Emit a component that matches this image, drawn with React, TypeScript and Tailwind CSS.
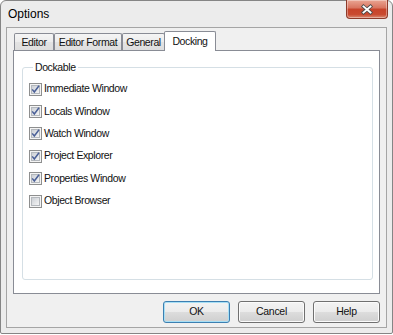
import React from "react";

const items: [string, boolean][] = [
  ["Immediate Window", true],
  ["Locals Window", true],
  ["Watch Window", true],
  ["Project Explorer", true],
  ["Properties Window", true],
  ["Object Browser", false],
];

function CheckBox({ checked }: { checked: boolean }) {
  return (
    <svg width="13" height="13" viewBox="0 0 13 13" className="shrink-0">
      <defs>
        <linearGradient id="cbg" x1="0" y1="0" x2="1" y2="1">
          <stop offset="0" stopColor="#c9cdd3" />
          <stop offset="1" stopColor="#f7f7f7" />
        </linearGradient>
      </defs>
      <rect x="0.5" y="0.5" width="12" height="12" fill="#f4f4f4" stroke="#8e8f8f" />
      <rect x="2.5" y="2.5" width="8" height="8" fill="url(#cbg)" stroke="#b4b8bd" />
      {checked && (
        <path d="M3.2 6.4 L5.3 9 L10 2.8" stroke="#4a5f97" strokeWidth="1.5" fill="none" />
      )}
    </svg>
  );
}

function Tab({ label, w }: { label: string; w: string }) {
  return (
    <div
      className={`${w} h-[17px] border border-b-0 border-[#898c95] rounded-t-[2px] bg-[linear-gradient(#f5f5f5,#ececec_50%,#e3e3e3_50%,#dedede)] flex items-center justify-center pt-[1px] text-[10.5px] tracking-[-0.4px] text-[#111]`}
    >
      {label}
    </div>
  );
}

function Button({ label, focused }: { label: string; focused?: boolean }) {
  return (
    <div
      className={`w-[67px] h-[22px] rounded-[3px] border flex items-center justify-center text-[10.5px] tracking-[-0.3px] text-[#111] bg-[linear-gradient(#f3f3f3,#ebebeb_50%,#dddddd_50%,#cfcfcf)] ${
        focused
          ? "border-[#3c7fb1] shadow-[inset_0_0_0_1px_#a8dff5]"
          : "border-[#707070] shadow-[inset_0_0_0_1px_#fbfbfb]"
      }`}
    >
      {label}
    </div>
  );
}

export default function App() {
  return (
    <div className="w-[393px] h-[335px] bg-white font-['Liberation_Sans',Arial,sans-serif]">
      <div className="w-[393px] h-[334px] rounded-t-[6px] rounded-b-[2px] border border-[#858585] bg-[#ececec] flex flex-col px-[5px] pb-[5px]">
        {/* title bar */}
        <div className="h-[26px] flex items-start justify-between">
          <div className="pl-[2px] pt-[6px] text-[12px] leading-[14px] text-black">Options</div>
          <div className="-mt-[1px] mr-[-1px] w-[42px] h-[19px] rounded-b-[4px] border border-t-0 border-[#8d3a2a] bg-[linear-gradient(#eaa593,#d8735e_45%,#c7432a_50%,#c94a30_80%,#d98a72)] shadow-[inset_0_0_0_1px_rgba(255,255,255,0.35)] flex items-center justify-center">
            <svg width="14" height="11" viewBox="0 0 14 11">
              <path d="M3.5 2.5 L10.5 8.5 M10.5 2.5 L3.5 8.5" stroke="#4b4b4b" strokeWidth="3.6" strokeLinecap="square" />
              <path d="M3.5 2.5 L10.5 8.5 M10.5 2.5 L3.5 8.5" stroke="#ffffff" strokeWidth="1.9" strokeLinecap="square" />
            </svg>
          </div>
        </div>
        {/* client */}
        <div className="flex-1 border border-[#a5a5a5] bg-[#f0f0f0] flex flex-col px-[6px] pb-[4px]">
          {/* tab strip */}
          <div className="h-[22px] flex items-end pl-[1px]">
            <Tab label="Editor" w="w-[40px]" />
            <Tab label="Editor Format" w="w-[68px]" />
            <Tab label="General" w="w-[43px]" />
            <div className="relative z-10 w-[52px] h-[20px] -mb-[1px] -ml-[1px] border border-b-0 border-[#898c95] rounded-t-[2px] bg-white flex items-start justify-center pt-[2px] text-[10.5px] tracking-[-0.4px] text-[#111]">
              Docking
            </div>
          </div>
          {/* panel */}
          <div className="flex-1 border border-[#898c95] bg-white px-[8px] pr-[6px] pb-[13px] flex flex-col">
            <fieldset className="flex-1 mt-[10px] border border-[#d5dfe5] rounded-[3px] pl-[6px] pt-[4px]">
              <legend className="ml-[4px] px-[2px] text-[10.5px] leading-[13px] tracking-[-0.4px] text-[#111]">Dockable</legend>
              <div className="flex flex-col">
                {items.map(([label, checked]) => (
                  <div key={label} className="h-[22.4px] flex items-center gap-[2px]">
                    <CheckBox checked={checked} />
                    <span className="text-[10.5px] tracking-[-0.4px] text-[#111]">{label}</span>
                  </div>
                ))}
              </div>
            </fieldset>
          </div>
          {/* buttons */}
          <div className="mt-[7px] flex justify-end gap-[8px]">
            <Button label="OK" focused />
            <Button label="Cancel" />
            <Button label="Help" />
          </div>
        </div>
      </div>
    </div>
  );
}
